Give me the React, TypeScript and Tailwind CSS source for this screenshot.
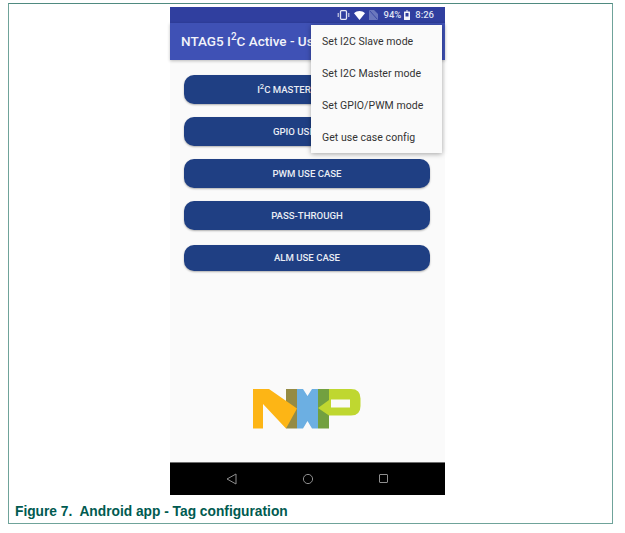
function Btn({ children, h, mt }: { children: React.ReactNode; h: string; mt: string }) {
  return (
    <div className={`${h} ${mt} flex items-center justify-center pt-[1px] rounded-[10px] bg-[#1f3f83] shadow-[0_1px_2px_rgba(0,0,0,0.3)] text-[9.6px] font-medium text-[#e9edf4] [font-family:Roboto,sans-serif]`}>
      {children}
    </div>
  );
}

function Item({ children }: { children: string }) {
  return <div className="h-8 flex items-center pl-[11px] pt-[2px] text-[10.5px] tracking-[0.05px] text-[#333333] [font-family:Roboto,sans-serif] whitespace-nowrap">{children}</div>;
}

export default function App() {
  return (
    <div className="w-[625px] h-[533px] bg-white overflow-hidden pt-[3px] pl-2">
      <div className="w-[605px] h-[521px] border border-[#6fa39a] border-t-[#4f8a80] flex flex-col">
        <div className="relative ml-[161px] mt-[3px] w-[275px] h-[488px] flex flex-col bg-[#fafafa]">
          <div className="h-4 bg-[#303f9f] flex items-center justify-end pr-[11px] text-[9.5px] font-medium text-[#dfe3f3] [font-family:Roboto,sans-serif]">
            <svg width="13" height="10" viewBox="0 0 13 10">
              <rect x="3.5" y="0.7" width="6" height="8.6" rx="1" fill="none" stroke="#e6e9f5" strokeWidth="1.3" />
              <path d="M1.2 3v4M11.8 3v4" stroke="#e6e9f5" strokeWidth="1" />
            </svg>
            <svg width="11" height="9" viewBox="0 0 11 9" className="ml-1">
              <path d="M0 2.2C3-.7 8-.7 11 2.2L5.5 9z" fill="#ffffff" />
            </svg>
            <svg width="9" height="10" viewBox="0 0 9 10" className="ml-1">
              <path d="M0 0h5l4 4v6H0z" fill="#6b78bd" />
              <path d="M0.5 0.5l8 9" stroke="#303f9f" strokeWidth="0.8" />
            </svg>
            <span className="ml-[6px]">94%</span>
            <svg width="6" height="10" viewBox="0 0 6 10" className="ml-[3px]">
              <rect x="0" y="1.500" width="6" height="8.500" rx="0.500" fill="#f2f3fa" />
              <rect x="2" y="0.500" width="2" height="1" fill="#f2f3fa" />
              <rect x="1.500" y="3" width="3" height="3.500" fill="#303f9f" />
            </svg>
            <span className="ml-[5px]">8:26</span>
          </div>
          <div className="h-[37px] bg-[#3f51b5] shadow-[0_1px_3px_rgba(0,0,0,0.25)] flex items-center pl-[11px] text-[13.5px] font-medium text-[#f2f3fa] [font-family:Roboto,sans-serif] whitespace-nowrap overflow-hidden">
            <span>NTAG5 I<sup className="text-[10px] leading-none top-[-6px]">2</sup>C Active - Use case</span>
          </div>
          <div className="flex-1 flex flex-col pl-[14px] pr-[15px] pt-[15px]">
            <Btn h="h-[29px]" mt="mt-0"><span>I<sup className="text-[7.500px] leading-none top-[-4px]">2</sup>C MASTER USE CASE</span></Btn>
            <Btn h="h-[29px]" mt="mt-[13px]">GPIO USE CASE</Btn>
            <Btn h="h-[29px]" mt="mt-[13px]">PWM USE CASE</Btn>
            <Btn h="h-[29px]" mt="mt-[13px]">PASS-THROUGH</Btn>
            <Btn h="h-[26px]" mt="mt-[15px]">ALM USE CASE</Btn>
            <svg width="108" height="40" viewBox="253 390 108 40" className="mt-[118px] ml-[69px]">
              <rect x="286" y="390" width="11" height="39.500" fill="#958b44" />
              <path d="M253 390H269L297 409.500L286 429.500L263 405V429.500H253Z" fill="#fdb515" />
              <path d="M297 390H303L307.500 397L312 390H318V429.500H312L307.500 422L303 429.500H297Z" fill="#6cafe2" />
              <rect x="318" y="390" width="11" height="39.500" fill="#72a040" />
              <path fillRule="evenodd" d="M329 390H351Q360.500 390 360.500 399.500V407Q360.500 416.500 351 416.500H329L318 409L329 401ZM331 400.500V408.500H350V400.500Z" fill="#bfd730" />
            </svg>
          </div>
          <div className="h-[33px] bg-black border-t border-[#6e6e6e] flex items-center justify-center gap-[60px]">
            <svg width="16" height="12" viewBox="0 0 16 12">
              <path d="M12 1v10L3 6z" fill="none" stroke="#8f8f8f" strokeWidth="1" />
            </svg>
            <svg width="16" height="12" viewBox="0 0 16 12">
              <circle cx="8" cy="6" r="4.600" fill="none" stroke="#8f8f8f" strokeWidth="1" />
            </svg>
            <svg width="16" height="12" viewBox="0 0 16 12">
              <rect x="3.500" y="1.500" width="8" height="8" rx="0.500" fill="none" stroke="#8f8f8f" strokeWidth="1" />
            </svg>
          </div>
          <div className="absolute left-[141px] top-[18px] w-[131px] h-[128px] bg-[#fafafa] shadow-[0_1px_5px_rgba(0,0,0,0.35)]">
            <Item>Set I2C Slave mode</Item>
            <Item>Set I2C Master mode</Item>
            <Item>Set GPIO/PWM mode</Item>
            <Item>Get use case config</Item>
          </div>
        </div>
        <div className="mt-[9px] pl-[6px] text-[13.750px] leading-4 font-bold text-[#005a50] [font-family:'Liberation_Sans',sans-serif] whitespace-pre">Figure 7.  Android app - Tag configuration</div>
      </div>
    </div>
  );
}
